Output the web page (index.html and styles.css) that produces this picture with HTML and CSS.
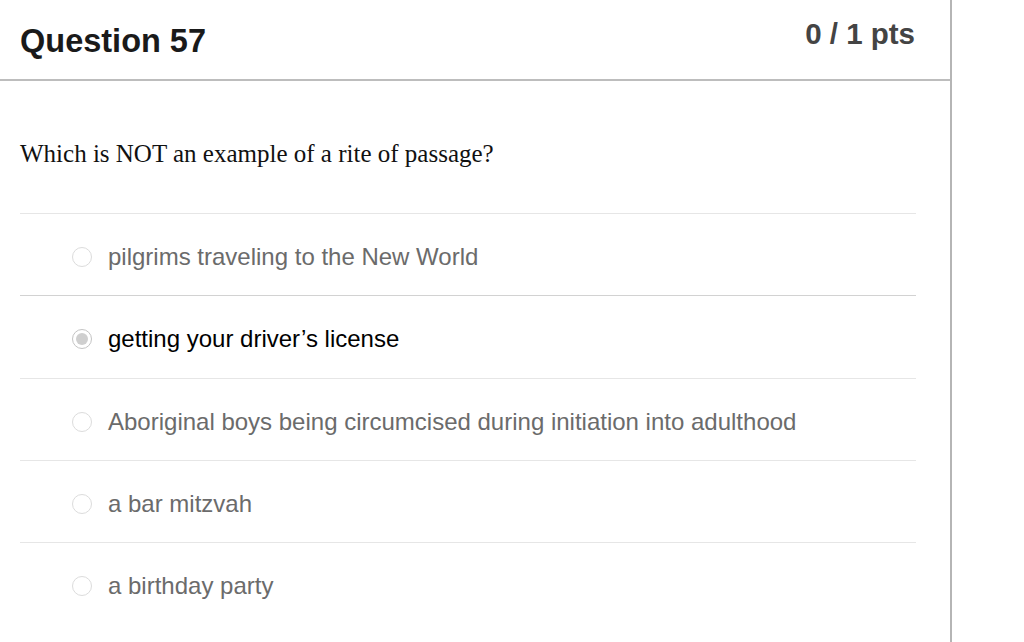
FILE: index.html
```html
<!DOCTYPE html>
<html>
<head>
<meta charset="utf-8">
<link rel="stylesheet" href="styles.css">
</head>
<body>
<div class="question">
  <div class="header">
    <h2 class="title">Question 57</h2>
    <div class="pts">0 / 1 pts</div>
  </div>
  <div class="body">
    <p class="prompt">Which is NOT an example of a rite of passage?</p>
    <div class="answers">
      <div class="answer"><span class="radio"></span><span class="label">pilgrims traveling to the New World</span></div>
      <div class="answer selected tall"><span class="radio"></span><span class="label">getting your driver’s license</span></div>
      <div class="answer"><span class="radio"></span><span class="label">Aboriginal boys being circumcised during initiation into adulthood</span></div>
      <div class="answer"><span class="radio"></span><span class="label">a bar mitzvah</span></div>
      <div class="answer"><span class="radio"></span><span class="label">a birthday party</span></div>
    </div>
  </div>
</div>
</body>
</html>
```

FILE: styles.css
```css
html, body {
  margin: 0;
  padding: 0;
  background: #fff;
}
body {
  font-family: "Liberation Sans", Arial, sans-serif;
  height: 642px;
  overflow: hidden;
}
.question {
  width: 950px;
  height: 642px;
  border-right: 2px solid #b5b5b5;
}
.header {
  display: flex;
  justify-content: space-between;
  align-items: flex-start;
  height: 79px;
  padding: 0 35px 0 20px;
  border-bottom: 2px solid #bdbdbd;
}
.title {
  margin: 25px 0 0;
  font-size: 32.5px;
  line-height: 1;
  font-weight: bold;
  color: #1a1a1a;
}
.pts {
  margin-top: 19px;
  font-size: 29.5px;
  line-height: 1;
  font-weight: bold;
  color: #444;
}
.body {
  padding: 60px 34px 0 20px;
}
.prompt {
  margin: 0;
  font-family: "Liberation Serif", "Times New Roman", serif;
  font-size: 25px;
  line-height: 1;
  color: #111;
}
.answers {
  margin-top: 47px;
}
.answer {
  display: flex;
  align-items: center;
  gap: 16px;
  padding: 31px 0 26px 52px;
  border-top: 1px solid #e6e6e6;
}
.answer.tall {
  padding-bottom: 27px;
}
.answer:nth-child(2) {
  border-top-color: #d2d2d2;
}
.radio {
  flex: none;
  width: 18px;
  height: 18px;
  border-radius: 50%;
  border: 1px solid #dcdcdc;
  background: #fff;
  box-sizing: content-box;
  display: flex;
  align-items: center;
  justify-content: center;
}
.answer.selected .radio {
  border-color: #c4c4c4;
}
.answer.selected .radio::after {
  content: "";
  width: 12px;
  height: 12px;
  border-radius: 50%;
  background: #cfcfcf;
}
.label {
  font-size: 24px;
  line-height: 24px;
  color: #6b6b6b;
}
.answer.selected .label {
  color: #000;
}
```
